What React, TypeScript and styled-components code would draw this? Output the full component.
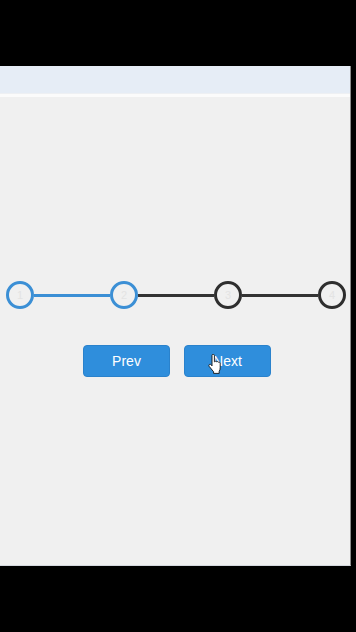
import styled, {createGlobalStyle} from "styled-components";

const GlobalStyle = createGlobalStyle`
  html, body {
    margin: 0;
    padding: 0;
    background: #000;
    font-family: "Liberation Sans", Arial, sans-serif;
  }
`

const steps = [1, 2, 3, 4]
const current = 2

export default function App() {
    return (
        <Page>
            <GlobalStyle/>
            <Screen>
                <TopBar/>
                <Divider/>
                <Content>
                    <Stepper>
                        {steps.map((n, i) => (
                            <StepGroup key={n}>
                                {i > 0 && <Connector $done={n <= current}/>}
                                <StepCircle $done={n <= current}>{n}</StepCircle>
                            </StepGroup>
                        ))}
                    </Stepper>
                    <ButtonRow>
                        <NavButton>Prev</NavButton>
                        <NavButton>
                            Next
                            <Cursor viewBox="0 0 14 20">
                                <path
                                    d="M4 1.5c0-.8.6-1.3 1.2-1.3s1.2.5 1.2 1.3v6.3l.4-.1c.5-.6 1.6-.5 1.9.2.5-.5 1.6-.4 1.9.4.6-.3 1.6 0 1.6.9v4.6c0 1.6-.4 2.6-1 3.6v2H5.6v-1.6L1.2 12.4c-.6-.8-.3-1.8.5-2 .6-.2 1.2 0 1.7.6L4 11.8z"
                                    fill="#fff" stroke="#111" strokeWidth="0.9" strokeLinejoin="round"/>
                            </Cursor>
                        </NavButton>
                    </ButtonRow>
                </Content>
            </Screen>
        </Page>
    )
}

const Page = styled.div`
  width: 356px;
  height: 632px;
  padding-top: 66px;
  box-sizing: border-box;
  background: #000;
`

const Screen = styled.div`
  width: 350px;
  height: 499px;
  background: #f0f0f0;
  border-right: 1px solid #8a8a8a;
  border-bottom: 1px solid #d4d8de;
  display: flex;
  flex-direction: column;
`

const TopBar = styled.div`
  height: 27px;
  background: #e6edf6;
`

const Divider = styled.div`
  height: 4px;
  background: #fbfbfb;
  border-top: 1px solid #eef0f3;
  box-sizing: border-box;
`

const Content = styled.div`
  flex: 1;
  display: flex;
  flex-direction: column;
  padding-top: 184px;
`

const Stepper = styled.div`
  display: flex;
  align-items: center;
  padding-left: 6px;
`

const StepGroup = styled.div`
  display: flex;
  align-items: center;
`

const Connector = styled.div<{ $done: boolean }>`
  width: 76px;
  height: 3px;
  background: ${p => p.$done ? "#3b8fd5" : "#333"};
`

const StepCircle = styled.div<{ $done: boolean }>`
  width: 28px;
  height: 28px;
  box-sizing: border-box;
  border-radius: 50%;
  border: 3px solid ${p => p.$done ? "#3b8fd5" : "#2e2e2e"};
  display: flex;
  align-items: center;
  justify-content: center;
  font-size: 11px;
  color: #e3e3e3;
`

const ButtonRow = styled.div`
  display: flex;
  gap: 14px;
  padding-left: 83px;
  margin-top: 36px;
`

const NavButton = styled.div`
  position: relative;
  width: 87px;
  height: 32px;
  box-sizing: border-box;
  border: 1px solid #2a82cc;
  border-radius: 4px;
  background: #2f8edc;
  color: #fff;
  font-size: 14px;
  display: flex;
  align-items: center;
  justify-content: center;
`

const Cursor = styled.svg`
  position: absolute;
  left: 23px;
  top: 8px;
  width: 14px;
  height: 20px;
`
